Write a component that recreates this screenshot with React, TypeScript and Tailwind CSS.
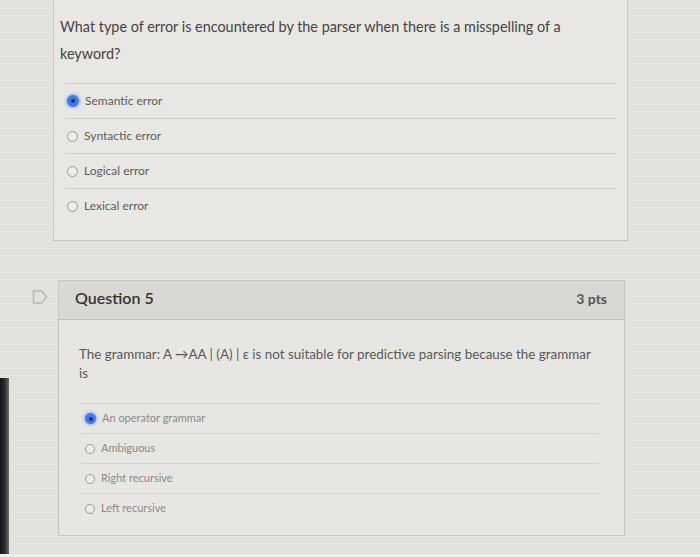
import React from "react";

const font = { fontFamily: "Lato, 'Open Sans', 'Noto Sans', sans-serif" };

function Radio({ checked, size = 11 }: { checked?: boolean; size?: number }) {
  if (checked) {
    return (
      <span
        className="flex shrink-0 items-center justify-center rounded-full bg-[#3f7cf2] shadow-[0_0_3px_1px_rgba(70,130,245,0.55)]"
        style={{ width: size + 1, height: size + 1 }}
      >
        <span className="block h-[4px] w-[4px] rounded-full bg-[#1c2f66]" />
      </span>
    );
  }
  return (
    <span
      className="block shrink-0 rounded-full border-[1.5px] border-[#9a9896] bg-[#eeece9]"
      style={{ width: size, height: size }}
    />
  );
}

const scan =
  "bg-[repeating-linear-gradient(0deg,rgba(0,0,0,0.025)_0px,rgba(0,0,0,0.025)_1px,transparent_1px,transparent_3px)]";

export default function App() {
  const top = ["Semantic error", "Syntactic error", "Logical error", "Lexical error"];
  const bottom = ["An operator grammar", "Ambiguous", "Right recursive", "Left recursive"];
  return (
    <div
      className="relative h-[557px] w-[700px] overflow-hidden bg-[#e5e3df]"
      style={font}
    >
      <div className={`flex h-full w-full flex-col ${scan}`}>
        {/* Top card */}
        <div className="ml-[53px] mt-[-10px] w-[575px] border border-[#c9c6c2] bg-[#e9e7e4] pb-[17px] pt-[22px]">
          <p className="pl-[6px] text-[14.4px] leading-[27px] text-[#454443]">
            What type of error is encountered by the parser when there is a misspelling of a
            <br />
            keyword?
          </p>
          <div className="mx-[11px] mt-[16px]">
            {top.map((t, i) => (
              <div
                key={t}
                className="flex h-[35px] items-center gap-[6px] border-t border-[#d3d0cc] pl-[2px]"
              >
                <Radio checked={i === 0} />
                <span className="text-[12px] text-[#5d5c5a]">{t}</span>
              </div>
            ))}
          </div>
        </div>

        {/* Question 5 */}
        <div className="mt-[39px] flex items-start gap-[10px] pl-[32px]">
          <svg width="16" height="16" viewBox="0 0 16 16" className="mt-[9px] shrink-0">
            <path
              d="M1.5 2 H9.5 L14.5 8 L9.5 14 H1.5 Z"
              fill="none"
              stroke="#b9b7b4"
              strokeWidth="1.6"
              strokeLinejoin="round"
            />
          </svg>
          <div className="w-[567px] border border-[#c9c6c2] bg-[#e8e6e2]">
            <div className="flex h-[39px] items-center justify-between border-b border-[#c4c1bd] bg-[#dad8d4] pb-[4px] pl-[16px] pr-[17px]">
              <span className="text-[16px] font-semibold text-[#343434]">Question 5</span>
              <span className="text-[14px] font-bold text-[#555453]">3 pts</span>
            </div>
            <div className="pb-[12px] pt-[25px]">
              <p className="pl-[20px] text-[13.4px] leading-[19px] text-[#595857]">
                The grammar: A →AA | (A) | ε is not suitable for predictive parsing because the grammar
                <br />
                is
              </p>
              <div className="ml-[22px] mr-[26px] mt-[20px]">
                {bottom.map((t, i) => (
                  <div
                    key={t}
                    className="flex h-[30px] items-center gap-[6px] border-t border-[#d6d3cf] pl-[4px]"
                  >
                    <Radio checked={i === 0} size={10} />
                    <span className="text-[11px] text-[#8b8987]">{t}</span>
                  </div>
                ))}
              </div>
            </div>
          </div>
        </div>
      </div>

      {/* monitor bezel edge in bottom-left corner */}
      <div className="absolute bottom-0 left-0 top-[378px] w-[9px] bg-gradient-to-r from-[#141414] via-[#2a2a2a] to-[#6b6966]" />
      <div className="absolute bottom-0 left-0 right-0 h-[3px] bg-[#f1efec]" />
    </div>
  );
}
